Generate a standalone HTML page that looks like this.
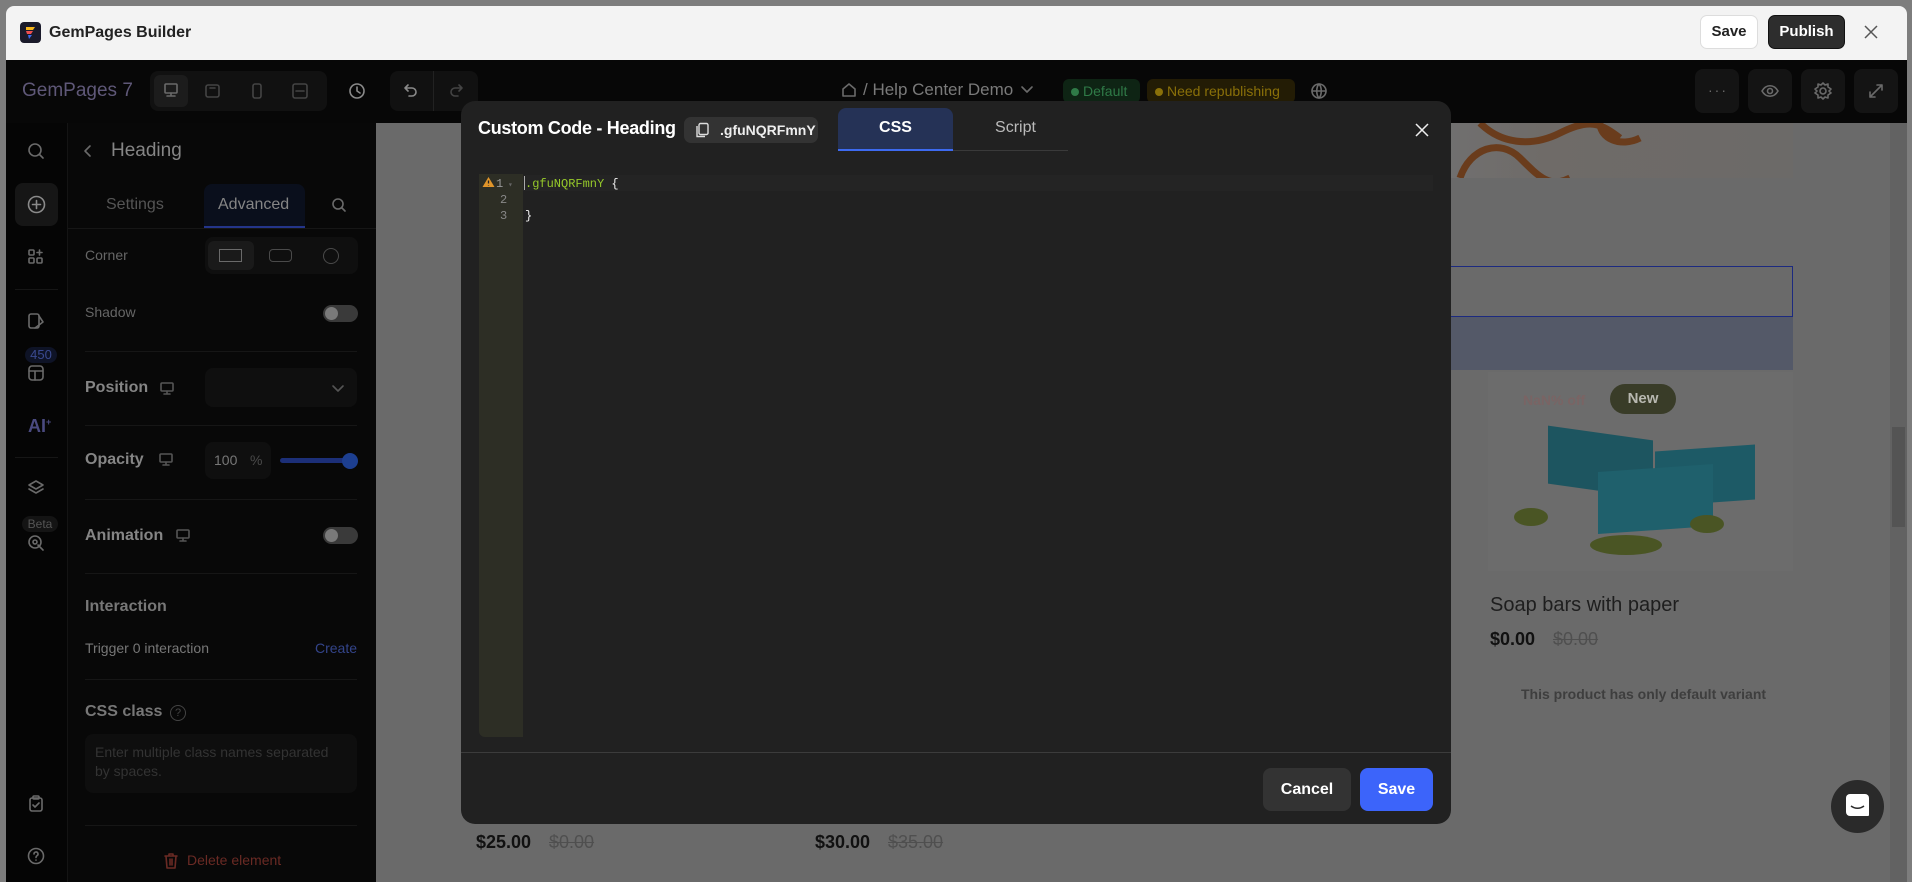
<!DOCTYPE html>
<html><head><meta charset="utf-8"><style>
*{box-sizing:border-box;margin:0;padding:0}
body{width:1912px;height:882px;overflow:hidden;background:#7d7d7d;font-family:"Liberation Sans",sans-serif;position:relative}
.a{position:absolute}
.ic{position:absolute;fill:none;stroke:#6a6a6a;stroke-width:1.6;stroke-linecap:round;stroke-linejoin:round}
.lbl{position:absolute;color:#666;font-size:14px}
.blb{position:absolute;color:#858585;font-size:16px;font-weight:bold}
.sep{position:absolute;left:85px;width:272px;height:1px;background:#161616}
.tg{position:absolute;width:35px;height:17px;border-radius:9px;background:#3a3a3a}
.tg:after{content:"";position:absolute;left:2px;top:2px;width:13px;height:13px;border-radius:50%;background:#7a7a7a}
.tb{position:absolute;top:69px;width:44px;height:44px;border-radius:8px;background:#141414}
</style></head><body>
<div class="a" style="left:6px;top:6px;width:1901px;height:876px;background:#f3f3f3;border-radius:8px 8px 0 0;overflow:hidden"></div>
<div class="a" style="left:20px;top:22px;width:21px;height:21px;border-radius:4px;background:#1a1a2a"></div>
<svg class="a" style="left:22px;top:24px" width="17" height="17" viewBox="0 0 17 17"><path d="M4 3h9l-2 3H4z" fill="#f6b61c"/><path d="M4 7h7l-2 3H5z" fill="#ef4e4e"/><path d="M6 11h4l-3 4z" fill="#3d6af0"/></svg>
<div class="a" style="left:49px;top:24px;font-size:16px;font-weight:bold;color:#222">GemPages Builder</div>
<div class="a" style="left:1700px;top:15px;width:58px;height:34px;border-radius:7px;background:#fff;border:1px solid #ddd;font-size:15px;font-weight:bold;color:#222;text-align:center;line-height:32px">Save</div>
<div class="a" style="left:1768px;top:15px;width:77px;height:34px;border-radius:7px;background:#2d2d2d;border:1px solid #111;font-size:15px;font-weight:bold;color:#fff;text-align:center;line-height:32px">Publish</div>
<svg class="a" style="left:1864px;top:25px" width="14" height="14"><path d="M1 1L13 13M13 1L1 13" stroke="#555" stroke-width="1.5"/></svg>

<div class="a" style="left:6px;top:60px;width:1901px;height:63px;background:#070707"></div>
<div class="a" style="left:22px;top:80px;font-size:19px;color:#5f5878">GemPages 7</div>
<div class="a" style="left:150px;top:71px;width:177px;height:40px;border-radius:8px;background:#111"></div>
<div class="a" style="left:154px;top:75px;width:34px;height:32px;border-radius:6px;background:#1c1c1c"></div>
<svg class="ic" style="left:161px;top:81px" width="20" height="20" viewBox="0 0 20 20"><rect x="4" y="3" width="12" height="9" rx="1"/><path d="M6 15h8M10 12v3"/></svg>
<svg class="ic" style="left:203px;top:81px;stroke:#444" width="20" height="20" viewBox="0 0 20 20"><rect x="3" y="4" width="13" height="12" rx="2"/><path d="M7 7h5"/></svg>
<svg class="ic" style="left:247px;top:81px;stroke:#444" width="20" height="20" viewBox="0 0 20 20"><rect x="6" y="3" width="8" height="14" rx="2"/></svg>
<svg class="ic" style="left:290px;top:81px;stroke:#444" width="20" height="20" viewBox="0 0 20 20"><rect x="3" y="3" width="14" height="14" rx="2"/><path d="M6 10h8"/></svg>
<svg class="ic" style="left:347px;top:81px;stroke:#8a8a8a" width="20" height="20" viewBox="0 0 20 20"><circle cx="10" cy="10" r="7"/><path d="M10 6v4l3 2"/></svg>
<div class="a" style="left:390px;top:71px;width:88px;height:40px;border-radius:8px;background:#111"></div>
<div class="a" style="left:433px;top:71px;width:1px;height:40px;background:#222"></div>
<svg class="ic" style="left:401px;top:81px;stroke:#8a8a8a" width="20" height="20" viewBox="0 0 20 20"><path d="M7 4L4 7l3 3M4 7h7a4 4 0 010 8H8"/></svg>
<svg class="ic" style="left:446px;top:81px;stroke:#444" width="20" height="20" viewBox="0 0 20 20"><path d="M13 4l3 3-3 3M16 7H9a4 4 0 000 8h3"/></svg>
<svg class="ic" style="left:840px;top:81px" width="18" height="18" viewBox="0 0 18 18"><path d="M3 8l6-5 6 5v7H3z"/></svg>
<div class="a" style="left:863px;top:80px;font-size:17px;color:#7a7a7a">/ Help Center Demo</div>
<svg class="ic" style="left:1020px;top:85px" width="14" height="10"><path d="M2 2l5 5 5-5"/></svg>
<div class="a" style="left:1063px;top:79px;width:77px;height:24px;border-radius:6px;background:#0e2414;color:#2f7a47;font-size:14px;line-height:24px;padding-left:8px"><span style="display:inline-block;width:8px;height:8px;border-radius:50%;background:#2f7a47;margin-right:4px"></span>Default</div>
<div class="a" style="left:1147px;top:79px;width:148px;height:24px;border-radius:6px;background:#231c05;color:#8a7009;font-size:14px;line-height:24px;padding-left:8px"><span style="display:inline-block;width:8px;height:8px;border-radius:50%;background:#8a7009;margin-right:4px"></span>Need republishing</div>
<svg class="ic" style="left:1309px;top:81px" width="20" height="20" viewBox="0 0 20 20"><circle cx="10" cy="10" r="7"/><path d="M3 10h14M10 3c3 3 3 11 0 14M10 3c-3 3-3 11 0 14"/></svg>
<div class="tb" style="left:1695px"></div><div class="tb" style="left:1748px"></div><div class="tb" style="left:1801px"></div><div class="tb" style="left:1854px"></div>
<div class="a" style="left:1708px;top:82px;color:#6a6a6a;font-size:14px;letter-spacing:2px">···</div>
<svg class="ic" style="left:1760px;top:81px" width="20" height="20" viewBox="0 0 20 20"><path d="M2 10c4-7 12-7 16 0-4 7-12 7-16 0z"/><circle cx="10" cy="10" r="2.5"/></svg>
<svg class="ic" style="left:1813px;top:81px" width="20" height="20" viewBox="0 0 20 20"><circle cx="10" cy="10" r="3"/><path d="M10 2l2 2 3-1 0 3 3 2-2 2 2 2-3 2 0 3-3-1-2 2-2-2-3 1 0-3-3-2 2-2-2-2 3-2 0-3 3 1z"/></svg>
<svg class="ic" style="left:1866px;top:81px" width="20" height="20" viewBox="0 0 20 20"><path d="M4 16L16 4M11 4h5v5M4 11v5h5"/></svg>

<div class="a" style="left:6px;top:123px;width:62px;height:759px;background:#050505;border-right:1px solid #141414"></div>
<svg class="ic" style="left:26px;top:141px" width="20" height="20" viewBox="0 0 20 20"><circle cx="9" cy="9" r="6"/><path d="M13.5 13.5L17 17"/></svg>
<div class="a" style="left:15px;top:183px;width:43px;height:43px;border-radius:8px;background:#161616"></div>
<svg class="ic" style="left:26px;top:194px;stroke:#8a8a8a" width="21" height="21" viewBox="0 0 21 21"><circle cx="10.5" cy="10.5" r="8"/><path d="M10.5 6.5v8M6.5 10.5h8"/></svg>
<svg class="ic" style="left:26px;top:247px" width="20" height="20" viewBox="0 0 20 20"><rect x="3" y="3" width="5" height="5" rx="1"/><rect x="3" y="11" width="5" height="5" rx="1"/><rect x="11" y="11" width="5" height="5" rx="1"/><path d="M13.5 3v5M11 5.5h5"/></svg>
<div class="a" style="left:15px;top:289px;width:43px;height:1px;background:#161616"></div>
<svg class="ic" style="left:26px;top:311px" width="20" height="20" viewBox="0 0 20 20"><rect x="3" y="3" width="10" height="14" rx="2"/><path d="M9 17l8-6-4-6"/></svg>
<div class="a" style="left:25px;top:347px;width:32px;height:16px;border-radius:8px;background:#0e1326;color:#3a4a90;font-size:13px;text-align:center;line-height:16px">450</div>
<svg class="ic" style="left:26px;top:363px" width="20" height="20" viewBox="0 0 20 20"><rect x="3" y="3" width="14" height="14" rx="3"/><path d="M3 8h14M9 8v9"/></svg>
<div class="a" style="left:28px;top:416px;color:#4a4a80;font-size:18px;font-weight:bold">AI<sup style="font-size:9px">+</sup></div>
<div class="a" style="left:15px;top:457px;width:43px;height:1px;background:#161616"></div>
<svg class="ic" style="left:26px;top:478px" width="20" height="20" viewBox="0 0 20 20"><path d="M10 3l7 4-7 4-7-4zM3 11l7 4 7-4"/></svg>
<div class="a" style="left:22px;top:516px;width:36px;height:16px;border-radius:8px;background:#141414;color:#555;font-size:12px;text-align:center;line-height:16px">Beta</div>
<svg class="ic" style="left:26px;top:533px" width="20" height="20" viewBox="0 0 20 20"><circle cx="9" cy="9" r="6"/><circle cx="9" cy="9" r="2"/><path d="M12 12l5 5"/></svg>
<svg class="ic" style="left:26px;top:794px" width="20" height="20" viewBox="0 0 20 20"><rect x="4" y="4" width="12" height="13" rx="2"/><rect x="7" y="2" width="6" height="3" rx="1"/><path d="M7 11l2 2 4-4"/></svg>
<svg class="ic" style="left:26px;top:846px" width="20" height="20" viewBox="0 0 20 20"><circle cx="10" cy="10" r="7.5"/><path d="M8 8a2 2 0 113 1.7c-.7.4-1 .8-1 1.8M10 14v.1"/></svg>

<div class="a" style="left:68px;top:123px;width:308px;height:759px;background:#080808"></div>
<svg class="ic" style="left:83px;top:144px;stroke:#6a6a6a" width="10" height="14"><path d="M7 2L2 7l5 5"/></svg>
<div class="a" style="left:111px;top:140px;font-size:19px;color:#858585">Heading</div>
<div class="a" style="left:106px;top:196px;font-size:16px;color:#555">Settings</div>
<div class="a" style="left:204px;top:184px;width:101px;height:44px;border-radius:8px 8px 0 0;background:#0a0f1c;border-bottom:2px solid #24358a"></div>
<div class="a" style="left:218px;top:196px;font-size:16px;color:#858585">Advanced</div>
<svg class="ic" style="left:331px;top:197px" width="16" height="16" viewBox="0 0 16 16"><circle cx="7" cy="7" r="5"/><path d="M11 11l3 3"/></svg>
<div class="a" style="left:68px;top:228px;width:308px;height:1px;background:#161616"></div>

<div class="lbl" style="left:85px;top:247px">Corner</div>
<div class="a" style="left:205px;top:237px;width:153px;height:37px;border-radius:8px;background:#0f0f0f"></div>
<div class="a" style="left:208px;top:241px;width:46px;height:29px;border-radius:6px;background:#1a1a1a"></div>
<div class="a" style="left:219px;top:249px;width:23px;height:13px;border:1.5px solid #6a6a6a"></div>
<div class="a" style="left:269px;top:249px;width:23px;height:13px;border:1.5px solid #4a4a4a;border-radius:4px"></div>
<div class="a" style="left:323px;top:248px;width:16px;height:16px;border:1.5px solid #4a4a4a;border-radius:50%"></div>
<div class="lbl" style="left:85px;top:304px">Shadow</div>
<div class="tg" style="left:323px;top:305px"></div>
<div class="sep" style="top:351px"></div>
<div class="blb" style="left:85px;top:379px">Position</div>
<svg class="ic" style="left:159px;top:381px;stroke:#555" width="16" height="16" viewBox="0 0 16 16"><rect x="2" y="2" width="12" height="8" rx="1"/><path d="M5 13h6M8 10v3"/></svg>
<div class="a" style="left:205px;top:368px;width:152px;height:39px;border-radius:8px;background:#0f0f0f"></div>
<svg class="ic" style="left:331px;top:384px;stroke:#555" width="14" height="9"><path d="M2 2l5 5 5-5"/></svg>
<div class="sep" style="top:425px"></div>
<div class="blb" style="left:85px;top:451px">Opacity</div>
<svg class="ic" style="left:158px;top:452px;stroke:#555" width="16" height="16" viewBox="0 0 16 16"><rect x="2" y="2" width="12" height="8" rx="1"/><path d="M5 13h6M8 10v3"/></svg>
<div class="a" style="left:205px;top:442px;width:66px;height:37px;border-radius:8px;background:#0f0f0f"></div>
<div class="a" style="left:214px;top:452px;font-size:14px;color:#777">100</div>
<div class="a" style="left:250px;top:452px;font-size:14px;color:#4a4a4a">%</div>
<div class="a" style="left:280px;top:458px;width:72px;height:5px;border-radius:3px;background:#1c2f78"></div>
<div class="a" style="left:342px;top:453px;width:16px;height:16px;border-radius:50%;background:#1d3f90"></div>
<div class="sep" style="top:499px"></div>
<div class="blb" style="left:85px;top:527px">Animation</div>
<svg class="ic" style="left:175px;top:528px;stroke:#555" width="16" height="16" viewBox="0 0 16 16"><rect x="2" y="2" width="12" height="8" rx="1"/><path d="M5 13h6M8 10v3"/></svg>
<div class="tg" style="left:323px;top:527px"></div>
<div class="sep" style="top:573px"></div>
<div class="a" style="left:85px;top:598px;font-size:16px;font-weight:bold;color:#777">Interaction</div>
<div class="lbl" style="left:85px;top:640px;color:#777">Trigger 0 interaction</div>
<div class="a" style="left:315px;top:640px;font-size:14px;color:#33448a">Create</div>
<div class="sep" style="top:679px"></div>
<div class="blb" style="left:85px;top:703px;color:#777">CSS class</div>
<div class="a" style="left:170px;top:705px;width:16px;height:16px;border:1.3px solid #444;border-radius:50%;color:#444;font-size:11px;text-align:center;line-height:14px">?</div>
<div class="a" style="left:85px;top:734px;width:272px;height:59px;border-radius:8px;background:#0e0e0e;padding:9px 10px;font-size:14px;line-height:19px;color:#333">Enter multiple class names separated by spaces.</div>
<div class="sep" style="top:825px"></div>
<svg class="ic" style="left:163px;top:852px;stroke:#6a2a24" width="16" height="18" viewBox="0 0 16 18"><path d="M2 4h12M6 4V2h4v2M3 4l1 12h8l1-12M7 7v6M9 7v6"/></svg>
<div class="a" style="left:187px;top:852px;font-size:14px;color:#6a2a24">Delete element</div>

<div class="a" style="left:376px;top:123px;width:1531px;height:759px;background:#6a6a6a"></div>
<div class="a" style="left:1440px;top:123px;width:353px;height:55px;background:linear-gradient(90deg,#707070,#6f6b68 30%,#6c6a68);overflow:hidden">
<svg width="353" height="55"><path d="M20 55c10-30 40-40 60-20s30 30 50 20M40 0c20 20 50 25 80 10s40-10 60 5M160 0c0 15 20 25 40 15" stroke="#6a3c1c" stroke-width="7" fill="none"/></svg></div>
<div class="a" style="left:1440px;top:266px;width:353px;height:51px;border:1.5px solid #1c2a80;border-left:none"></div>
<div class="a" style="left:1440px;top:317px;width:353px;height:53px;background:#545968"></div>
<div class="a" style="left:1488px;top:372px;width:305px;height:199px;background:#6c6c6c"></div>
<div class="a" style="left:1523px;top:392px;font-size:14px;font-weight:bold;color:#7a6464">NaN% off</div>
<div class="a" style="left:1548px;top:433px;width:105px;height:58px;background:#1d5560;transform:skewY(8deg)"></div>
<div class="a" style="left:1655px;top:448px;width:100px;height:55px;background:#1d5a66;transform:skewY(-4deg)"></div>
<div class="a" style="left:1598px;top:468px;width:115px;height:62px;background:#1f606c;transform:skewY(-4deg)"></div>
<div class="a" style="left:1610px;top:384px;width:66px;height:30px;border-radius:15px;background:#393c28;color:#b8b8b0;font-size:15px;font-weight:bold;text-align:center;line-height:30px">New</div>
<div class="a" style="left:1514px;top:508px;width:34px;height:18px;border-radius:50%;background:#4a5524"></div>
<div class="a" style="left:1690px;top:515px;width:34px;height:18px;border-radius:50%;background:#4a5524"></div>
<div class="a" style="left:1590px;top:535px;width:72px;height:20px;border-radius:50%;background:#4a5524"></div>
<div class="a" style="left:1490px;top:594px;font-size:20px;color:#1e1e1e">Soap bars with paper</div>
<div class="a" style="left:1490px;top:629px;font-size:18px;font-weight:bold;color:#111">$0.00</div>
<div class="a" style="left:1553px;top:629px;font-size:18px;color:#4f4f4f;text-decoration:line-through">$0.00</div>
<div class="a" style="left:1521px;top:686px;font-size:14px;font-weight:bold;color:#3e3e3e">This product has only default variant</div>
<div class="a" style="left:476px;top:832px;font-size:18px;font-weight:bold;color:#111">$25.00</div>
<div class="a" style="left:549px;top:832px;font-size:18px;color:#4f4f4f;text-decoration:line-through">$0.00</div>
<div class="a" style="left:815px;top:832px;font-size:18px;font-weight:bold;color:#111">$30.00</div>
<div class="a" style="left:888px;top:832px;font-size:18px;color:#4f4f4f;text-decoration:line-through">$35.00</div>
<div class="a" style="left:1890px;top:123px;width:17px;height:759px;background:#626262"></div>
<div class="a" style="left:1892px;top:427px;width:13px;height:100px;background:#545454"></div>
<div class="a" style="left:1831px;top:780px;width:53px;height:53px;border-radius:50%;background:#2a2a2a"></div>
<div class="a" style="left:1846px;top:794px;width:23px;height:22px;border-radius:4px 4px 1px 4px;background:#fff"></div>
<svg class="a" style="left:1849px;top:803px" width="17" height="8"><path d="M2 3c4 3 9 3 13 0" stroke="#2a2a2a" stroke-width="1.5" fill="none"/></svg>

<div class="a" style="left:461px;top:101px;width:990px;height:723px;background:#212121;border-radius:14px"></div>
<div class="a" style="left:478px;top:118px;font-size:18px;font-weight:bold;color:#fff;letter-spacing:-0.3px">Custom Code - Heading</div>
<div class="a" style="left:684px;top:117px;width:134px;height:26px;border-radius:7px;background:#333"></div>
<svg class="a" style="left:694px;top:122px" width="16" height="17" viewBox="0 0 16 17"><rect x="5" y="1.5" width="9" height="11" rx="1.5" fill="none" stroke="#ddd" stroke-width="1.4"/><path d="M3 4v10.5h8" fill="none" stroke="#ddd" stroke-width="1.4"/></svg>
<div class="a" style="left:720px;top:122px;font-size:14px;font-weight:bold;color:#eee">.gfuNQRFmnY</div>
<div class="a" style="left:838px;top:108px;width:115px;height:43px;border-radius:8px 8px 0 0;background:#253256;border-bottom:2px solid #3d6af0"></div>
<div class="a" style="left:838px;top:119px;width:115px;text-align:center;font-size:16px;font-weight:bold;color:#fff">CSS</div>
<div class="a" style="left:953px;top:150px;width:115px;height:1px;background:#3a3a3a"></div>
<div class="a" style="left:953px;top:119px;width:125px;text-align:center;font-size:16px;color:#bbb">Script</div>
<svg class="a" style="left:1414px;top:122px" width="16" height="16"><path d="M2 2L14 14M14 2L2 14" stroke="#eee" stroke-width="1.5"/></svg>
<div class="a" style="left:479px;top:174px;width:44px;height:563px;background:#2d2e25;border-radius:0 0 0 6px"></div>
<div class="a" style="left:523px;top:175px;width:910px;height:16px;background:#242424"></div>
<svg class="a" style="left:482px;top:176px" width="13" height="12"><path d="M6.5 1L12.5 11H0.5z" fill="#e0952a"/><path d="M6.5 4.5v3M6.5 9v.5" stroke="#222" stroke-width="1.3"/></svg>
<div class="a" style="left:496px;top:176px;font-family:'Liberation Mono',monospace;font-size:12px;line-height:16px;color:#999">1<span style="font-size:8px;color:#666"> ▾</span></div>
<div class="a" style="left:500px;top:192px;font-family:'Liberation Mono',monospace;font-size:12px;line-height:16px;color:#888">2<br>3</div>
<div class="a" style="left:524px;top:176px;width:1px;height:14px;background:#aaa"></div>
<div class="a" style="left:525px;top:176px;font-family:'Liberation Mono',monospace;font-size:12px;line-height:16px;color:#eee"><span style="color:#96c92a">.gfuNQRFmnY</span> {<br><br>}</div>
<div class="a" style="left:461px;top:752px;width:990px;height:1px;background:#3c3c3c"></div>
<div class="a" style="left:1263px;top:768px;width:88px;height:43px;border-radius:8px;background:#333;color:#fff;font-size:16px;font-weight:bold;text-align:center;line-height:43px">Cancel</div>
<div class="a" style="left:1360px;top:768px;width:73px;height:43px;border-radius:8px;background:#3c64fa;color:#fff;font-size:16px;font-weight:bold;text-align:center;line-height:43px">Save</div>
</body></html>
